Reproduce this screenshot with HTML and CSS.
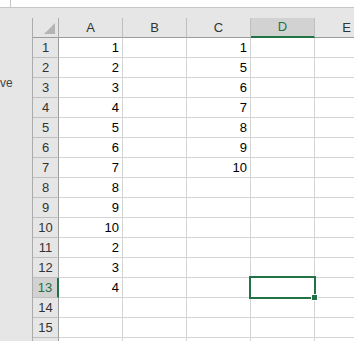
FILE: index.html
```html
<html>
	<head>
		<title>Sheet1</title>
		<link rel="stylesheet" href="styles.css">
	</head>
	<body>
		<div class="formula">
			<div class="namebox"></div>
			<div class="fx"></div>
		</div>
		<div class="main">
			<div class="side">ve</div>
			<div class="sheet">
				<div class="corner"><span class="tri"></span></div>
				<div class="colhead">A</div>
				<div class="colhead">B</div>
				<div class="colhead">C</div>
				<div class="colhead sel">D</div>
				<div class="colhead">E</div>

				<div class="rowhead">1</div><div class="cell">1</div><div class="cell"></div><div class="cell">1</div><div class="cell"></div><div class="cell"></div>
				<div class="rowhead">2</div><div class="cell">2</div><div class="cell"></div><div class="cell">5</div><div class="cell"></div><div class="cell"></div>
				<div class="rowhead">3</div><div class="cell">3</div><div class="cell"></div><div class="cell">6</div><div class="cell"></div><div class="cell"></div>
				<div class="rowhead">4</div><div class="cell">4</div><div class="cell"></div><div class="cell">7</div><div class="cell"></div><div class="cell"></div>
				<div class="rowhead">5</div><div class="cell">5</div><div class="cell"></div><div class="cell">8</div><div class="cell"></div><div class="cell"></div>
				<div class="rowhead">6</div><div class="cell">6</div><div class="cell"></div><div class="cell">9</div><div class="cell"></div><div class="cell"></div>
				<div class="rowhead">7</div><div class="cell">7</div><div class="cell"></div><div class="cell">10</div><div class="cell"></div><div class="cell"></div>
				<div class="rowhead">8</div><div class="cell">8</div><div class="cell"></div><div class="cell"></div><div class="cell"></div><div class="cell"></div>
				<div class="rowhead">9</div><div class="cell">9</div><div class="cell"></div><div class="cell"></div><div class="cell"></div><div class="cell"></div>
				<div class="rowhead">10</div><div class="cell">10</div><div class="cell"></div><div class="cell"></div><div class="cell"></div><div class="cell"></div>
				<div class="rowhead">11</div><div class="cell">2</div><div class="cell"></div><div class="cell"></div><div class="cell"></div><div class="cell"></div>
				<div class="rowhead">12</div><div class="cell">3</div><div class="cell"></div><div class="cell"></div><div class="cell"></div><div class="cell"></div>
				<div class="rowhead sel">13</div><div class="cell">4</div><div class="cell"></div><div class="cell"></div><div class="cell active"><span class="handle"></span></div><div class="cell"></div>
				<div class="rowhead">14</div><div class="cell"></div><div class="cell"></div><div class="cell"></div><div class="cell"></div><div class="cell"></div>
				<div class="rowhead">15</div><div class="cell"></div><div class="cell"></div><div class="cell"></div><div class="cell"></div><div class="cell"></div>
				<div class="rowhead"></div><div class="cell"></div><div class="cell"></div><div class="cell"></div><div class="cell"></div><div class="cell"></div>
			</div>
		</div>
	</body>
</html>
```

FILE: styles.css
```css
body {
	margin: 0;
	background: #e6e6e6;
	font-family: "Liberation Sans", Arial, sans-serif;
	overflow: hidden;
}
.formula {
	display: flex;
	height: 7px;
	background: #ffffff;
	border-bottom: 1px solid #c6c6c6;
	margin-bottom: 10px;
}
.namebox {
	width: 10px;
	border-right: 1px solid #c6c6c6;
}
.fx {
	flex: 1;
}
.main {
	display: flex;
	overflow: hidden;
}
.side {
	width: 32px;
	flex: none;
	padding-top: 58px;
	font-size: 12px;
	color: #444444;
}
.sheet {
	display: grid;
	grid-template-columns: 26px 64px 64px 64px 64px 64px;
	grid-auto-rows: 20px;
	border-left: 1px solid #ababab;
}
.corner, .colhead, .rowhead, .cell {
	border-right: 1px solid #d4d4d4;
	border-bottom: 1px solid #d4d4d4;
	font-size: 13px;
	line-height: 19px;
}
.corner {
	position: relative;
	border-right-color: #ababab;
	border-bottom-color: #9b9b9b;
}
.tri {
	position: absolute;
	right: 3px;
	bottom: 3px;
	width: 0;
	height: 0;
	border-left: 11px solid transparent;
	border-bottom: 11px solid #b4b4b4;
}
.colhead {
	text-align: center;
	color: #333333;
	border-right-color: #bfbfbf;
	border-bottom-color: #9b9b9b;
}
.colhead.sel {
	background: #d2d2d2;
	color: #217346;
	border-bottom: 2px solid #217346;
	line-height: 18px;
}
.rowhead {
	text-align: center;
	color: #333333;
	border-right-color: #9b9b9b;
	border-bottom-color: #bfbfbf;
}
.rowhead.sel {
	background: #d2d2d2;
	color: #217346;
	border-right: 2px solid #217346;
}
.cell {
	background: #ffffff;
	text-align: right;
	padding-right: 3px;
	color: #000000;
}
.active {
	position: relative;
}
.active::after {
	content: "";
	position: absolute;
	top: -2px;
	left: -2px;
	right: -2px;
	bottom: -2px;
	border: 2px solid #217346;
}
.handle {
	position: absolute;
	right: -4px;
	bottom: -4px;
	width: 5px;
	height: 5px;
	background: #217346;
	border: 1px solid #ffffff;
	z-index: 2;
}
```
